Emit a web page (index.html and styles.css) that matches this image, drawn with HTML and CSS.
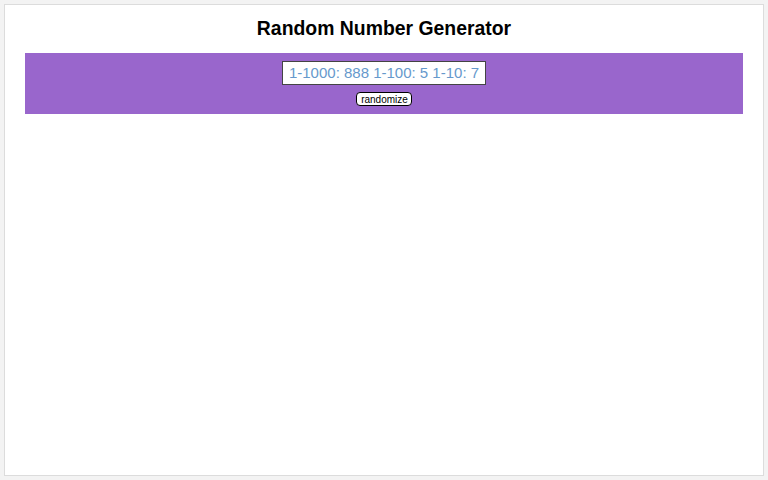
FILE: index.html
```html
<!DOCTYPE html>
<html>
<head>
<meta charset="utf-8">
<link rel="stylesheet" href="styles.css">
</head>
<body>
<div class="card">
  <h1 class="title">Random Number Generator</h1>
  <div class="band">
    <div class="output">1-1000: 888 1-100: 5 1-10: 7</div>
    <button class="btn">randomize</button>
  </div>
</div>
</body>
</html>
```
FILE: styles.css
```css
html, body {
  margin: 0;
  padding: 0;
  background: #f3f3f3;
  font-family: "Liberation Sans", Arial, sans-serif;
}
.card {
  margin: 4px;
  box-sizing: border-box;
  height: 472px;
  background: #fff;
  border: 1px solid #dcdcdc;
  padding: 0 20px;
}
.title {
  margin: 11px 0 13px;
  font-size: 19.4px;
  line-height: 24px;
  font-weight: bold;
  text-align: center;
  color: #000;
}
.band {
  background: #9966cc;
  height: 61px;
  box-sizing: border-box;
  padding-top: 8px;
  display: flex;
  flex-direction: column;
  align-items: center;
}
.output {
  width: 204px;
  height: 24px;
  box-sizing: border-box;
  border: 1px solid #444;
  background: #fff;
  color: #6699cc;
  font-size: 15px;
  line-height: 22px;
  text-align: center;
  white-space: nowrap;
}
.btn {
  margin-top: 7px;
  height: 14px;
  box-sizing: border-box;
  padding: 0 3px 0 4px;
  border: 1px solid #000;
  border-radius: 4px;
  background: #fff;
  font-family: "Liberation Sans", Arial, sans-serif;
  font-size: 10px;
  line-height: 11px;
  color: #000;
}
```
